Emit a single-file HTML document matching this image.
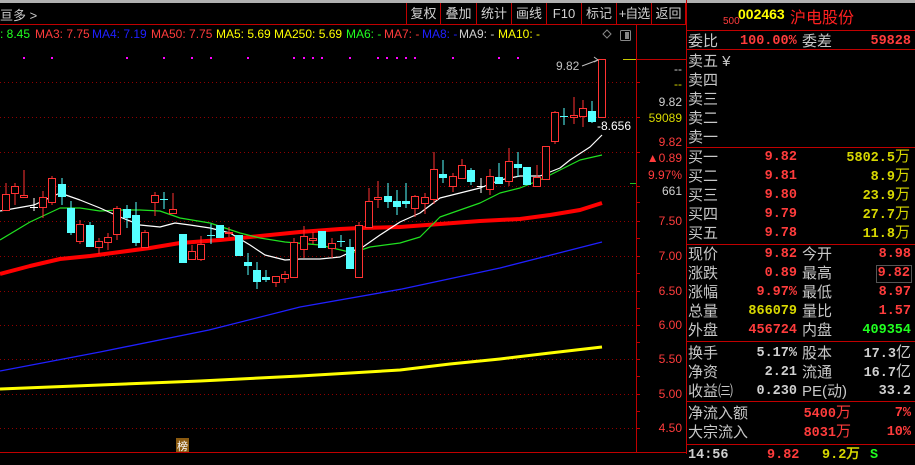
<!DOCTYPE html>
<html><head><meta charset="utf-8"><style>
*{margin:0;padding:0;box-sizing:border-box}
body{width:915px;height:454px;background:#000;overflow:hidden;position:relative;font-family:"Liberation Sans","Noto Sans CJK SC",sans-serif;}
.a{position:absolute;white-space:nowrap}
.btn{position:absolute;top:3px;height:22px;border-left:1px solid #c00000;color:#d0d0d0;font-size:13px;line-height:22px;text-align:center;white-space:nowrap;overflow:hidden}
.l{position:absolute;left:688px;color:#c8c8c8;font-size:15px;line-height:19px;white-space:nowrap}
.l2{position:absolute;left:802px;color:#c8c8c8;font-size:15px;line-height:19px;white-space:nowrap}
.v{position:absolute;font-size:13.5px;font-weight:bold;line-height:19px;text-align:right;font-family:"Liberation Mono",monospace;white-space:nowrap}
.r{color:#ff3c3c}.y{color:#d8d800}.w{color:#d0d0d0}.g{color:#20ff20}
.hl{position:absolute;left:686px;width:229px;height:1px;background:#c00000}
.ax{position:absolute;right:233px;font-size:12px;line-height:14px;text-align:right}
</style></head><body>
<div class="a" style="left:0;top:0;width:915px;height:3px;background:#b0b0b0"></div>
<div class="a" style="left:0;top:5px;color:#c8c8c8;font-size:13px">亘多 &gt;</div>
<div class="btn" style="left:406px;width:34px">复权</div>
<div class="btn" style="left:440px;width:36px">叠加</div>
<div class="btn" style="left:476px;width:35px">统计</div>
<div class="btn" style="left:511px;width:35px">画线</div>
<div class="btn" style="left:546px;width:35px">F10</div>
<div class="btn" style="left:581px;width:35px">标记</div>
<div class="btn" style="left:616px;width:35px;letter-spacing:-1px">+自选</div>
<div class="btn" style="left:651px;width:35px;border-right:1px solid #c00000">返回</div>
<div class="a" style="left:0;top:24px;width:686px;height:1px;background:#c00000"></div>
<div class="a" style="left:0;top:27px;font-size:12px;line-height:14px">
<span class="a g" style="left:0">: 8.45</span><span class="a r" style="left:35px">MA3: 7.75</span><span class="a" style="left:92px;color:#2020ff">MA4: 7.19</span><span class="a r" style="left:151px">MA50: 7.75</span><span class="a" style="left:216px;color:#ffff00">MA5: 5.69</span><span class="a" style="left:274px;color:#ffff00">MA250: 5.69</span><span class="a g" style="left:346px">MA6: -</span><span class="a r" style="left:384px">MA7: -</span><span class="a" style="left:422px;color:#2020ff">MA8: -</span><span class="a w" style="left:459px">MA9: -</span><span class="a" style="left:498px;color:#ffff00">MA10: -</span></div>

<svg class="a" style="left:0;top:0" width="915" height="454" viewBox="0 0 915 454">
<path d="M607 30l4 4-4 4-4-4z" stroke="#888" fill="none"/>
<rect x="620.5" y="30.5" width="10" height="10" rx="1" stroke="#888" fill="none"/>
<rect x="625" y="32" width="4" height="7" fill="#888"/>
<g stroke="#900000" stroke-dasharray="1 3">
<path d="M0 82.5H636M0 117.5H636M0 152.5H636M0 186.5H636M0 221.5H636M0 256.5H636M0 291.5H636M0 325.5H636M0 359.5H636M0 394.5H636M0 428.5H636"/></g>
<path d="M636.5 25V452M686.5 0V454M0 452.5H686" stroke="#c00000"/>
<path d="M636 59.5H686" stroke="#c00000"/>
<path d="M623 59.5H636" stroke="#c8c800"/>
<path d="M630 183.5H636" stroke="#20c020"/>
<g stroke="#c00000"><path d="M636 82.5h4M636 117.5h4M636 152.5h4M636 186.5h4M636 221.5h4M636 256.5h4M636 291.5h4M636 325.5h4M636 359.5h4M636 394.5h4M636 428.5h4M636 202.5h4M636 238.5h4M636 273.5h4M636 308.5h4M636 342.5h4M636 376.5h4M636 411.5h4"/></g>
<g fill="#ff00ff"><rect x="23" y="57" width="2" height="2"/><rect x="51" y="57" width="2" height="2"/><rect x="126" y="57" width="2" height="2"/><rect x="163" y="57" width="2" height="2"/><rect x="191" y="57" width="2" height="2"/><rect x="210" y="57" width="2" height="2"/><rect x="247" y="57" width="2" height="2"/><rect x="293" y="57" width="2" height="2"/><rect x="303" y="57" width="2" height="2"/><rect x="312" y="57" width="2" height="2"/><rect x="321" y="57" width="2" height="2"/><rect x="349" y="57" width="2" height="2"/><rect x="377" y="57" width="2" height="2"/><rect x="386" y="57" width="2" height="2"/><rect x="396" y="57" width="2" height="2"/><rect x="405" y="57" width="2" height="2"/><rect x="414" y="57" width="2" height="2"/><rect x="452" y="57" width="2" height="2"/><rect x="498" y="57" width="2" height="2"/><rect x="517" y="57" width="2" height="2"/></g>
<g fill="none" stroke-linejoin="round">
<polyline stroke="#ffff00" stroke-width="3" points="0,389 100,385 200,381 300,376 400,370 450,364 500,359 550,353 602,347"/>
<polyline stroke="#2020ff" stroke-width="1.3" points="0,371 100,352 209,330 300,307 402,289 500,268 602,242"/>
<polyline stroke="#ff0000" stroke-width="4" points="0,274 30,266 60,259 90,256 120,252 150,248 180,243 220,240 260,236 300,232 340,229 360,228 400,227 440,224 480,221 520,219 550,215 580,210 602,203"/>
<polyline stroke="#20e020" stroke-width="1.2" points="0,240 30,222 60,208 80,208 100,211 120,210 140,210 160,211 180,218 210,223 240,233 260,238 285,242 320,245 345,251 355,252 370,247 400,243 420,237 440,217 460,210 480,203 500,193 520,188 540,180 560,170 580,160 602,155"/>
<polyline stroke="#ffffff" stroke-width="1.2" points="0,211 34,205 60,193 80,200 100,208 120,217 140,225 160,227 175,223 190,225 210,228 230,233 250,245 265,255 285,260 300,259 320,259 340,257 355,250 360,249 380,235 400,222 420,213 440,198 460,193 480,188 500,180 520,176 540,176 550,172 560,168 570,160 590,147 602,135"/>
</g>
<g stroke="#ff3232" fill="#000">
<path d="M6 183V210M15 183V205M24 170V198M43 191V218M52 176V205M80 220V244M99 238V254M108 233V250M117 206V240M145 230V247M155 192V216M173 193V214M192 245V259M201 236V261M229 227V237M276 276V287M285 271V283M294 238V277M304 226V258M313 232V244M332 238V258M359 222V277M369 188V227M378 181V208M415 195V217M425 193V214M434 152V204M453 173V192M462 159V178M490 169V195M509 148V186M537 165V186M546 146V179M555 111V144M574 97V124M583 100V127M602 59V117"/>
<rect x="2.5" y="194.5" width="7" height="16"/><rect x="11.5" y="186.5" width="7" height="7"/><rect x="20.5" y="195.5" width="7" height="2"/><rect x="39.5" y="197.5" width="7" height="10"/><rect x="48.5" y="178.5" width="7" height="24"/><rect x="76.5" y="224.5" width="7" height="17"/><rect x="95.5" y="241.5" width="7" height="6"/><rect x="104.5" y="237.5" width="7" height="5"/><rect x="113.5" y="208.5" width="7" height="26"/><rect x="141.5" y="232.5" width="7" height="15"/><rect x="151.5" y="195.5" width="7" height="7"/><rect x="169.5" y="209.5" width="7" height="4"/><rect x="188.5" y="251.5" width="7" height="8"/><rect x="197.5" y="244.5" width="7" height="15"/><rect x="225.5" y="232.5" width="7" height="1"/><rect x="272.5" y="276.5" width="7" height="6"/><rect x="281.5" y="274.5" width="7" height="4"/><rect x="290.5" y="242.5" width="7" height="35"/><rect x="300.5" y="236.5" width="7" height="13"/><rect x="309.5" y="238.5" width="7" height="2"/><rect x="328.5" y="243.5" width="7" height="5"/><rect x="355.5" y="225.5" width="7" height="52"/><rect x="365.5" y="201.5" width="7" height="26"/><rect x="374.5" y="197.5" width="7" height="2"/><rect x="411.5" y="196.5" width="7" height="12"/><rect x="421.5" y="197.5" width="7" height="6"/><rect x="430.5" y="169.5" width="7" height="30"/><rect x="449.5" y="176.5" width="7" height="10"/><rect x="458.5" y="165.5" width="7" height="13"/><rect x="486.5" y="176.5" width="7" height="13"/><rect x="505.5" y="161.5" width="7" height="20"/><rect x="533.5" y="177.5" width="7" height="9"/><rect x="542.5" y="146.5" width="7" height="33"/><rect x="551.5" y="112.5" width="7" height="29"/><rect x="570.5" y="115.5" width="7" height="2"/><rect x="579.5" y="108.5" width="7" height="8"/><rect x="598.5" y="59.5" width="7" height="58"/>
</g>
<g stroke="#54ffff" fill="#54ffff">
<path d="M62 178V205M71 201V235M90 222V246M127 205V228M136 202V246M248 253V275M257 262V289M266 270V282M350 239V268M388 183V208M397 190V215M406 183V208M443 160V183M471 168V185M499 163V184M518 152V177M592 101V123M164 192V209M160 199.5H168M211 224V244M207 235.5H215M341 235V247M337 241.5H345M564 108V125M560 116.5H568"/>
<rect x="58.5" y="184.5" width="7" height="12"/><rect x="67.5" y="208.5" width="7" height="24"/><rect x="86.5" y="225.5" width="7" height="21"/><rect x="123.5" y="209.5" width="7" height="8"/><rect x="132.5" y="215.5" width="7" height="27"/><rect x="179.5" y="234.5" width="7" height="28"/><rect x="216.5" y="225.5" width="7" height="12"/><rect x="235.5" y="235.5" width="7" height="20"/><rect x="244.5" y="262.5" width="7" height="3"/><rect x="253.5" y="270.5" width="7" height="11"/><rect x="262.5" y="277.5" width="7" height="2"/><rect x="318.5" y="231.5" width="7" height="16"/><rect x="346.5" y="247.5" width="7" height="21"/><rect x="384.5" y="196.5" width="7" height="5"/><rect x="393.5" y="201.5" width="7" height="5"/><rect x="402.5" y="201.5" width="7" height="2"/><rect x="439.5" y="174.5" width="7" height="3"/><rect x="467.5" y="170.5" width="7" height="11"/><rect x="495.5" y="177.5" width="7" height="6"/><rect x="514.5" y="164.5" width="7" height="3"/><rect x="523.5" y="167.5" width="7" height="17"/><rect x="588.5" y="111.5" width="7" height="10"/>
</g>
<path d="M34 198V211M30 207.5H38M481 178V193M477 186.5H485" stroke="#fff"/>
<path d="M582 66L598 60M594 57l4 3-4 2" stroke="#c0c0c0" fill="none"/>
<text x="556" y="70" fill="#c0c0c0" font-size="12" font-family="Liberation Sans">9.82</text>
<text x="597" y="130" fill="#fff" font-size="12" font-family="Liberation Sans">-8.656</text>
<rect x="176" y="438" width="13" height="14" fill="#8a5a10"/>
<text x="177" y="450" fill="#fff" font-size="11" font-family="Noto Sans CJK SC">榜</text>
</svg>

<div class="ax w" style="top:62px">--</div>
<div class="ax y" style="top:77px">--</div>
<div class="ax w" style="top:95px">9.82</div>
<div class="ax y" style="top:111px">59089</div>
<div class="ax r" style="top:135px">9.82</div>
<div class="ax r" style="top:151px">▲0.89</div>
<div class="ax r" style="top:168px">9.97%</div>
<div class="ax w" style="top:184px">661</div>
<div class="ax r" style="top:214px">7.50</div>
<div class="ax r" style="top:249px">7.00</div>
<div class="ax r" style="top:284px">6.50</div>
<div class="ax r" style="top:318px">6.00</div>
<div class="ax r" style="top:352px">5.50</div>
<div class="ax r" style="top:387px">5.00</div>
<div class="ax r" style="top:421px">4.50</div>

<div class="a" style="left:723px;top:16px;color:#ff3c3c;font-size:10px">500</div>
<div class="a" style="left:738px;top:6px;color:#ffff00;font-size:14px;font-weight:bold">002463</div>
<div class="a" style="left:790px;top:4px;color:#ff2020;font-size:16px">沪电股份</div>
<div class="hl" style="top:30px"></div>
<div class="l" style="top:32px">委比</div>
<div class="v r" style="left:740px;top:32px">100.00%</div>
<div class="l2" style="top:32px">委差</div>
<div class="v r" style="right:4px;top:32px">59828</div>
<div class="hl" style="top:49px"></div>
<div class="l" style="top:52px">卖五 ¥</div>
<div class="l" style="top:71px">卖四</div>
<div class="l" style="top:90px">卖三</div>
<div class="l" style="top:109px">卖二</div>
<div class="l" style="top:128px">卖一</div>
<div class="hl" style="top:147px"></div>
<div class="l" style="top:148px">买一</div><div class="v r" style="right:118px;top:148px">9.82</div><div class="v y" style="right:5px;top:148px">5802.5<span style="font-weight:normal;font-size:15px">万</span></div>
<div class="l" style="top:167px">买二</div><div class="v r" style="right:118px;top:167px">9.81</div><div class="v y" style="right:5px;top:167px">8.9<span style="font-weight:normal;font-size:15px">万</span></div>
<div class="l" style="top:186px">买三</div><div class="v r" style="right:118px;top:186px">9.80</div><div class="v y" style="right:5px;top:186px">23.9<span style="font-weight:normal;font-size:15px">万</span></div>
<div class="l" style="top:205px">买四</div><div class="v r" style="right:118px;top:205px">9.79</div><div class="v y" style="right:5px;top:205px">27.7<span style="font-weight:normal;font-size:15px">万</span></div>
<div class="l" style="top:224px">买五</div><div class="v r" style="right:118px;top:224px">9.78</div><div class="v y" style="right:5px;top:224px">11.8<span style="font-weight:normal;font-size:15px">万</span></div>
<div class="hl" style="top:244px"></div>
<div class="l" style="top:245px">现价</div><div class="v r" style="right:118px;top:245px">9.82</div><div class="l2" style="top:245px">今开</div><div class="v r" style="right:4px;top:245px">8.98</div>
<div class="l" style="top:264px">涨跌</div><div class="v r" style="right:118px;top:264px">0.89</div><div class="l2" style="top:264px">最高</div><div class="v r" style="right:3px;top:265px;border:1px solid #555;padding:0 1px;line-height:16px">9.82</div>
<div class="l" style="top:283px">涨幅</div><div class="v r" style="right:118px;top:283px">9.97%</div><div class="l2" style="top:283px">最低</div><div class="v r" style="right:4px;top:283px">8.97</div>
<div class="l" style="top:302px">总量</div><div class="v y" style="right:118px;top:302px">866079</div><div class="l2" style="top:302px">量比</div><div class="v r" style="right:4px;top:302px">1.57</div>
<div class="l" style="top:321px">外盘</div><div class="v r" style="right:118px;top:321px">456724</div><div class="l2" style="top:321px">内盘</div><div class="v g" style="right:4px;top:321px">409354</div>
<div class="hl" style="top:341px"></div>
<div class="l" style="top:344px">换手</div><div class="v w" style="right:118px;top:344px">5.17%</div><div class="l2" style="top:344px">股本</div><div class="v w" style="right:4px;top:344px">17.3<span style="font-weight:normal;font-size:15px">亿</span></div>
<div class="l" style="top:363px">净资</div><div class="v w" style="right:118px;top:363px">2.21</div><div class="l2" style="top:363px">流通</div><div class="v w" style="right:4px;top:363px">16.7<span style="font-weight:normal;font-size:15px">亿</span></div>
<div class="l" style="top:382px">收益㈢</div><div class="v w" style="right:118px;top:382px">0.230</div><div class="l2" style="top:382px">PE(动)</div><div class="v w" style="right:4px;top:382px">33.2</div>
<div class="hl" style="top:401px"></div>
<div class="l" style="top:404px">净流入额</div><div class="v r" style="right:64px;top:404px">5400<span style="font-weight:normal;font-size:15px">万</span></div><div class="v r" style="right:4px;top:404px">7%</div>
<div class="l" style="top:423px">大宗流入</div><div class="v r" style="right:64px;top:423px">8031<span style="font-weight:normal;font-size:15px">万</span></div><div class="v r" style="right:4px;top:423px">10%</div>
<div class="hl" style="top:444px"></div>
<div class="v w" style="left:688px;top:446px;text-align:left">14:56</div>
<div class="v r" style="left:767px;top:446px">9.82</div>
<div class="v y" style="left:822px;top:446px">9.2万</div>
<div class="v g" style="left:870px;top:446px">S</div>
</body></html>
